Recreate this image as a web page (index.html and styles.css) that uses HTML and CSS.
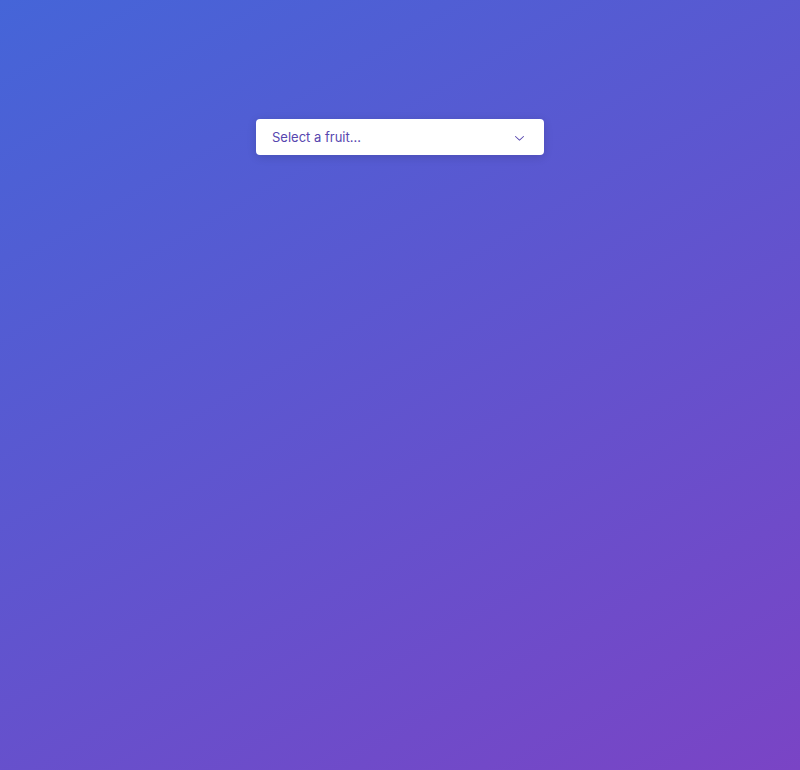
FILE: index.html
```html
<!DOCTYPE html>
<html lang="en">
<head>
<meta charset="utf-8">
<title>Select</title>
<link rel="stylesheet" href="styles.css">
</head>
<body>
<main class="stage">
  <button class="select-trigger" type="button" aria-label="Food">
    <span class="select-value">Select a fruit…</span>
    <span class="select-icon">
      <svg width="15" height="15" viewBox="0 0 15 15" fill="none" xmlns="http://www.w3.org/2000/svg"><path d="M3.13523 6.15803C3.3241 5.95657 3.64052 5.94637 3.84197 6.13523L7.5 9.56464L11.158 6.13523C11.3595 5.94637 11.6759 5.95657 11.8648 6.15803C12.0536 6.35949 12.0434 6.67591 11.842 6.86477L7.84197 10.6148C7.64964 10.7951 7.35036 10.7951 7.15803 10.6148L3.15803 6.86477C2.95657 6.67591 2.94637 6.35949 3.13523 6.15803Z" fill="currentColor" fill-rule="evenodd" clip-rule="evenodd"></path></svg>
    </span>
  </button>
</main>
</body>
</html>
```
FILE: styles.css
```css
html, body {
  margin: 0;
  padding: 0;
  height: 100%;
}
body {
  background: linear-gradient(330deg, #7a44c5 0%, #4565d8 100%);
  font-family: Inter, "Noto Sans", sans-serif;
}
.stage {
  display: flex;
  justify-content: center;
  padding-top: 119px;
  box-sizing: border-box;
  min-height: 100%;
}
.select-trigger {
  display: flex;
  align-items: center;
  justify-content: space-between;
  width: 288px;
  height: 36px;
  padding: 0 17px 0 16px;
  box-sizing: border-box;
  border: none;
  border-radius: 4px;
  background: #ffffff;
  color: #5746af;
  font-family: Inter, "Noto Sans", sans-serif;
  font-size: 13px;
  line-height: 1;
  box-shadow: 0 2px 10px rgba(0, 0, 0, 0.14);
  cursor: default;
}
.select-value {
  color: #5746af;
}
.select-icon {
  display: flex;
  color: #5746af;
}
```
